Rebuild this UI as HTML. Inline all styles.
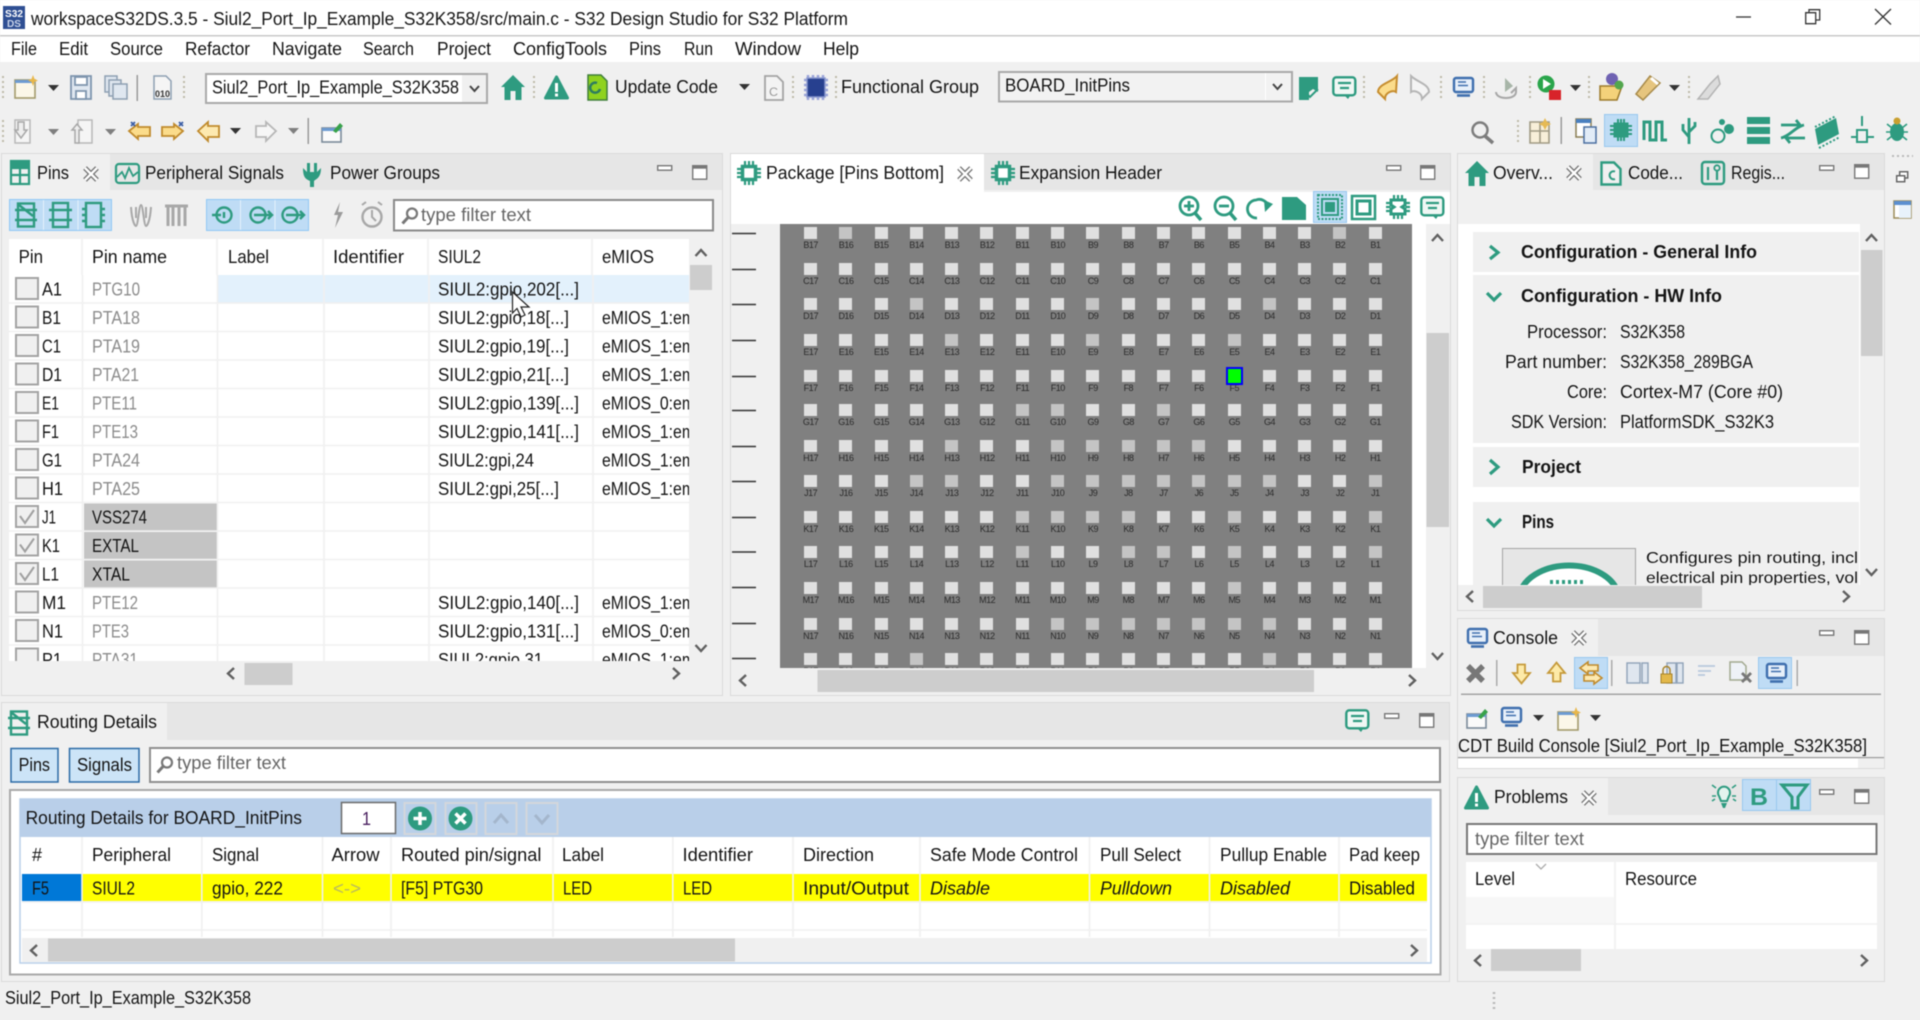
<!DOCTYPE html>
<html lang="en"><head><meta charset="utf-8"><title>S32 Design Studio</title>
<style>
html,body{margin:0;padding:0;width:1920px;height:1020px;overflow:hidden;background:#f0f0f0}
#w{position:relative;width:1920px;height:1020px;overflow:hidden;filter:blur(.45px)}
svg{position:absolute;left:0;top:0}
text{font:18px "Liberation Sans",sans-serif;fill:#141414}
.u text,text.u{transform:translateY(-.8px)}
.n{fill:#8c8c8c}.b{font-weight:bold}.i{font-style:italic}.h{fill:#666}
#pk{position:absolute;left:793px;top:227px;width:610px;height:441px;overflow:hidden;display:grid;grid-template-columns:repeat(17,35.3px);grid-template-rows:36px 35px 36px 36px 34px 36px 35px 36px 35px 36px 36px 35px 36px}
#pk i{display:block;position:relative;font:normal 9px/12px "Liberation Sans",sans-serif;color:#2b2b2b;text-align:center;padding-top:12px;letter-spacing:-.5px}
#pk i::before{content:"";position:absolute;left:11px;top:0;width:13px;height:12px;background:#e0e0e0}
#pk i.g::before{background:#c4c4c4}
#pk i.s::before{left:9.4px;top:-3px;width:13px;height:14px;background:#0f0;border:2px solid #00f}
</style></head><body><div id="w">
<svg width="1920" height="1020" viewBox="0 0 1920 1020" xmlns="http://www.w3.org/2000/svg">
<defs>
<clipPath id="c1"><rect x="9" y="239" width="680" height="422"/></clipPath>
<clipPath id="c2"><rect x="1473" y="224" width="386" height="361"/></clipPath>
<symbol id="tri" width="12" height="7" overflow="visible"><path d="M0 0H11L5.5 6Z" fill="#333"/></symbol>
<symbol id="x" width="16" height="16" overflow="visible"><path d="M2 2L14 14M14 2L2 14" stroke="#707070" stroke-width="5" fill="none"/><path d="M2 2L14 14M14 2L2 14" stroke="#fff" stroke-width="2.400" fill="none"/></symbol>
<symbol id="mn" width="16" height="7" overflow="visible"><rect x=".7" y=".7" width="14" height="4.5" fill="#fff" stroke="#777" stroke-width="1.4"/></symbol>
<symbol id="mx" width="16" height="16" overflow="visible"><rect x=".7" y=".7" width="14" height="13.5" fill="#fff" stroke="#777" stroke-width="1.4"/><rect x=".7" y=".7" width="14" height="3" fill="#777"/></symbol>
<symbol id="cb" width="25" height="24" overflow="visible"><rect x="1" y="1" width="22" height="21" fill="#f0f0f0" stroke="#a3a3a3" stroke-width="2"/></symbol>
<symbol id="cc" width="25" height="24" overflow="visible"><rect x="1" y="1" width="22" height="21" fill="#f0f0f0" stroke="#a3a3a3" stroke-width="2"/><path d="M5 11L10 18L19 5" fill="none" stroke="#a0a0a0" stroke-width="2"/></symbol>
<symbol id="up" width="14" height="10" overflow="visible"><path d="M1 8L6.5 2L12 8" fill="none" stroke="#606060" stroke-width="2.4"/></symbol>
<symbol id="dn" width="14" height="10" overflow="visible"><path d="M1 2L6.5 8L12 2" fill="none" stroke="#606060" stroke-width="2.4"/></symbol>
<symbol id="lf" width="10" height="14" overflow="visible"><path d="M8 1L2 6.5L8 12" fill="none" stroke="#606060" stroke-width="2.4"/></symbol>
<symbol id="rt" width="10" height="14" overflow="visible"><path d="M2 1L8 6.5L2 12" fill="none" stroke="#606060" stroke-width="2.4"/></symbol>
<symbol id="home" width="24" height="25" overflow="visible"><path d="M12 0L24 12H20.5V25H14.5V16H9.5V25H3.5V12H0Z" fill="#2e9b80"/></symbol>
<symbol id="warn" width="25" height="25" overflow="visible"><path d="M12.5 2L23.5 23H1.5Z" fill="#2e9b80" stroke="#2e9b80" stroke-width="3" stroke-linejoin="round"/><rect x="11" y="8" width="3" height="9" fill="#fff"/><rect x="11" y="18.5" width="3" height="3" fill="#fff"/></symbol>
<symbol id="chip" width="24" height="24" overflow="visible"><path d="M8 0V24M12 0V24M16 0V24M0 8H24M0 12H24M0 16H24" stroke="#2e9b80" stroke-width="2.2" stroke-dasharray="4.5 15 4.5" fill="none"/><rect x="5.5" y="5.5" width="13" height="13" fill="#fff" stroke="#2e9b80" stroke-width="3.5"/></symbol>
<symbol id="mon" width="21" height="20" overflow="visible"><rect x="1" y="1" width="19" height="14" rx="2" fill="#e8f0fa" stroke="#3f6fae" stroke-width="2.4"/><path d="M5 5H13M5 8.500H15" stroke="#3f6fae" stroke-width="1.6"/><path d="M4 18.500H17" stroke="#3f6fae" stroke-width="2.6"/></symbol>
<symbol id="new" width="24" height="24" overflow="visible"><rect x="1" y="5" width="20" height="18" fill="#fbf7e8" stroke="#a39a6c" stroke-width="1.6"/><rect x="1" y="5" width="20" height="3" fill="#6d9bd2"/><path d="M19 0L20.500 4L24 5.500L20.500 7L19 11L17.500 7L14 5.500L17.500 4Z" fill="#e8b74a"/></symbol>
<symbol id="pin" width="22" height="21" overflow="visible"><rect x="1" y="6" width="19" height="14" fill="#fafafa" stroke="#7b8a99" stroke-width="1.6"/><rect x="1" y="6" width="19" height="3" fill="#6d9bd2"/><path d="M12 9L19 1L22 4L15 11Z" fill="#38a24a"/></symbol>
<symbol id="srch" width="18" height="18" overflow="visible"><circle cx="11" cy="6.500" r="5" fill="none" stroke="#777" stroke-width="2.2"/><path d="M7 10.500L1.500 16.500" stroke="#777" stroke-width="3"/></symbol>
<symbol id="cdoc" width="22" height="25" overflow="visible"><path d="M1.500 1.500H14L20.500 8V23.500H1.500Z" fill="#f0f0f0" stroke="#2e9b80" stroke-width="2.400"/><path d="M15 10.500A4 4 0 1 0 15 18" fill="none" stroke="#2e9b80" stroke-width="2"/></symbol>
<symbol id="chat" width="25" height="23" overflow="visible"><rect x="1.300" y="1.300" width="22" height="18" rx="3" fill="#f0f7f4" stroke="#2e9b80" stroke-width="2.400"/><path d="M6 7H19M8 12H17" stroke="#2e9b80" stroke-width="2.200"/><path d="M13 20L16 23L18 20Z" fill="#2e9b80"/></symbol>
<symbol id="rout" width="22" height="26" overflow="visible"><rect x="3" y="1.500" width="16" height="23" fill="none" stroke="#2e9b80" stroke-width="2.400"/><path d="M0 8H22M0 18H22M4 3L18 14" stroke="#2e9b80" stroke-width="2.400"/></symbol>
<symbol id="ua" width="19" height="22" overflow="visible"><path d="M5.500 1.500H13V10H18L9.500 20.500L1 10H5.500Z" fill="#fdeaa8" stroke="#c69a3a" stroke-width="1.800"/></symbol>
</defs>

<rect width="1920" height="1020" fill="#f0f0f0"/>
<!-- title bar -->
<rect width="1920" height="35" fill="#fff"/>
<rect y="35" width="1920" height="1.500" fill="#c8c8c8"/>
<rect x="3" y="6" width="22" height="23" fill="#2f4f93"/>
<text x="5" y="17" style="font-size:10px;font-weight:bold;fill:#fff" textLength="18" lengthAdjust="spacingAndGlyphs">S32</text>
<text x="7" y="27" style="font-size:10px;font-weight:bold;fill:#c9d4ea" textLength="14" lengthAdjust="spacingAndGlyphs">DS</text>
<text x="31" y="25" textLength="817" lengthAdjust="spacingAndGlyphs">workspaceS32DS.3.5 - Siul2_Port_Ip_Example_S32K358/src/main.c - S32 Design Studio for S32 Platform</text>
<path d="M1736 17H1751" stroke="#333" stroke-width="1.300"/>
<path d="M1805.700 12.700H1815.700V23.700H1805.700ZM1809 12.700V9.700H1819.700V20H1815.700" fill="none" stroke="#333" stroke-width="1.300"/>
<path d="M1875 9L1891 24.500M1891 9L1875 24.500" stroke="#333" stroke-width="1.300"/>
<!-- menu -->
<rect y="36.500" width="1920" height="25.500" fill="#fff"/>
<g class="u">
<text x="11" y="56" textLength="26" lengthAdjust="spacingAndGlyphs">File</text>
<text x="59" y="56" textLength="29" lengthAdjust="spacingAndGlyphs">Edit</text>
<text x="110" y="56" textLength="53" lengthAdjust="spacingAndGlyphs">Source</text>
<text x="185" y="56" textLength="65" lengthAdjust="spacingAndGlyphs">Refactor</text>
<text x="272" y="56" textLength="70" lengthAdjust="spacingAndGlyphs">Navigate</text>
<text x="363" y="56" textLength="51" lengthAdjust="spacingAndGlyphs">Search</text>
<text x="437" y="56" textLength="54" lengthAdjust="spacingAndGlyphs">Project</text>
<text x="513" y="56" textLength="94" lengthAdjust="spacingAndGlyphs">ConfigTools</text>
<text x="629" y="56" textLength="32" lengthAdjust="spacingAndGlyphs">Pins</text>
<text x="684" y="56" textLength="29" lengthAdjust="spacingAndGlyphs">Run</text>
<text x="735" y="56" textLength="66" lengthAdjust="spacingAndGlyphs">Window</text>
<text x="823" y="56" textLength="36" lengthAdjust="spacingAndGlyphs">Help</text>
</g>

<!-- toolbar row 1 -->
<g fill="none" stroke="#bdb9a8" stroke-width="2" stroke-dasharray="2 3"><path d="M3 76V100M184 76V100M534 76V100M793 76V100M836 76V100M1364 76V100M1441 76V100M1484 76V100M1530 76V100M1589 76V100M1689 76V100M3 120V144M1518 120V144"/></g>
<use href="#new" x="14" y="75"/><use href="#tri" x="48" y="85"/>
<g fill="#dfe7f0" stroke="#7d94ad" stroke-width="1.800"><path d="M71 76H91V99H71Z"/><path d="M75 77H87V85H75Z" fill="#fff"/><path d="M76 91H86V99H76Z" fill="#fff"/></g>
<g fill="#dfe7f0" stroke="#8d9fb2" stroke-width="1.500"><path d="M105 76H117V92H105Z"/><path d="M109 80H121V96H109Z"/><path d="M113 84H127V99H113Z"/></g>
<rect x="136.500" y="75" width="1.500" height="26" fill="#9a9a9a"/>
<path d="M154 76H166L171 81V99H154Z" fill="#f5f5f5" stroke="#8d9fb2" stroke-width="1.500"/><text x="155" y="97" style="font-size:9px;fill:#333;font-weight:bold" textLength="15" lengthAdjust="spacingAndGlyphs">010</text>
<rect x="206" y="74" width="281" height="29" fill="#fff" stroke="#a9a9a9" stroke-width="2"/>
<rect x="462" y="75" width="24" height="27" fill="#f0f0f0"/>
<text class="u" x="212" y="94.300" textLength="247" lengthAdjust="spacingAndGlyphs">Siul2_Port_Ip_Example_S32K358</text>
<path d="M470 86L474.500 91L479 86" fill="none" stroke="#444" stroke-width="2"/>
<use href="#home" x="501" y="75"/><use href="#warn" x="544" y="75"/>
<path d="M588 75H601L607 81V100H588Z" fill="#8fd21f" stroke="#3f7f3a" stroke-width="1.500"/><path d="M597 83a5 5 0 1 0 3 6" fill="none" stroke="#2e7d5f" stroke-width="2.500"/>
<text class="u" x="615" y="94" textLength="103" lengthAdjust="spacingAndGlyphs">Update Code</text>
<use href="#tri" x="739" y="84"/>
<path d="M765 76H777L783 82V100H765Z" fill="#f3f3f3" stroke="#a3a3a3" stroke-width="1.800"/><text x="769" y="96" style="font-size:12px;fill:#999" textLength="9" lengthAdjust="spacingAndGlyphs">C</text>
<g><path d="M808 75V100M813 75V100M818 75V100M823 75V100M804 80H828M804 85H828M804 90H828M804 95H828" stroke="#9aa4d8" stroke-width="2.500"/><rect x="807" y="78" width="18" height="19" fill="#27408f" stroke="#8c99cf" stroke-width="1.500"/></g>
<text class="u" x="841" y="94" textLength="138" lengthAdjust="spacingAndGlyphs">Functional Group</text>
<rect x="999" y="72" width="293" height="29.500" fill="#f2f2f2" stroke="#a9a9a9" stroke-width="2"/>
<rect x="1265" y="73" width="1" height="27" fill="#fff"/>
<text class="u" x="1005" y="92.500" textLength="125" lengthAdjust="spacingAndGlyphs">BOARD_InitPins</text>
<path d="M1273 84L1277.500 89L1282 84" fill="none" stroke="#444" stroke-width="2"/>
<path d="M1299 77H1318V92L1313 89L1309 92V100H1299Z" fill="#2e9b80"/><path d="M1306 93L1310 97L1318 89" fill="none" stroke="#2e9b80" stroke-width="2"/>
<use href="#chat" x="1332" y="76"/>
<path d="M1397 76C1392 82 1378 84 1378 92L1385 99C1385 92 1393 90 1396 92Z" fill="#fbdc8b" stroke="#c68d2f" stroke-width="2"/>
<path d="M1411 76C1417 82 1429 84 1429 92L1422 99C1422 92 1414 90 1411 92Z" fill="#f4f4f4" stroke="#b5b5b5" stroke-width="2"/>
<use href="#mon" x="1453" y="77"/>
<path d="M1496 92C1496 100 1516 100 1516 92V88L1511 93" fill="#eee" stroke="#a7a7a7" stroke-width="2"/><path d="M1505 78L1513 86L1505 92Z" fill="#a7b5a8"/>
<circle cx="1546" cy="84" r="8.500" fill="#2aa54b"/><path d="M1543 79L1551 84L1543 89Z" fill="#fff"/><rect x="1549" y="90" width="12" height="10" fill="#d8232a"/>
<use href="#tri" x="1570" y="85"/>
<path d="M1600 86H1622L1617 100H1600Z" fill="#f4d27a" stroke="#9c7a2a" stroke-width="1.500"/><circle cx="1612" cy="79" r="6" fill="#6f62b2"/><circle cx="1619" cy="85" r="4.500" fill="#52a64d"/>
<path d="M1636 94L1650 76L1660 83L1643 100Z" fill="#e6c57e" stroke="#a78a4a" stroke-width="1.500"/><path d="M1651 78L1658 84" stroke="#fff" stroke-width="3"/>
<use href="#tri" x="1669" y="85"/>
<path d="M1698 99L1710 84L1718 76L1720 84L1708 99Z" fill="#dcdcdc" stroke="#b4b4b4" stroke-width="1.500"/>

<!-- toolbar row 2 -->
<path d="M15 120H30V143H15Z" fill="#f5f5f5" stroke="#b8b8b8" stroke-width="1.500"/><path d="M18 122H24V130H27L21 138L15 130H18Z" fill="#eee" stroke="#a8a8a8" stroke-width="1.500"/>
<use href="#tri" x="48" y="129" opacity=".6"/>
<path d="M78 120H92V143H78Z" fill="#f5f5f5" stroke="#b8b8b8" stroke-width="1.500"/><path d="M77 124L82 130H79V143H75V130H72Z" fill="#eee" stroke="#a8a8a8" stroke-width="1.500"/>
<use href="#tri" x="105" y="129" opacity=".6"/>
<path d="M129 131L138 124V127H150V136H138V139Z" fill="#fbdc8b" stroke="#c08a2c" stroke-width="1.800"/><path d="M131 122L135 126M135 122L131 126" stroke="#3d5fa6" stroke-width="1.800"/>
<path d="M183 131L174 124V127H162V136H174V139Z" fill="#fbdc8b" stroke="#c08a2c" stroke-width="1.800"/><path d="M179 122L183 126M183 122L179 126" stroke="#3d5fa6" stroke-width="1.800"/>
<path d="M198 131L208 122V126H219V137H208V141Z" fill="#fde9b0" stroke="#c08a2c" stroke-width="1.800"/>
<use href="#tri" x="230" y="128"/>
<path d="M276 131L266 122V126H256V137H266V141Z" fill="#f6f6f6" stroke="#b7b7b7" stroke-width="1.800"/>
<use href="#tri" x="288" y="128" opacity=".6"/>
<rect x="307.500" y="118" width="1.500" height="26" fill="#9a9a9a"/>
<use href="#pin" x="321" y="122"/>

<circle cx="1480" cy="130" r="7.500" fill="none" stroke="#7d7d7d" stroke-width="2.500"/><path d="M1485 136L1493 143" stroke="#7d7d7d" stroke-width="3.500"/>
<path d="M1530 122H1549V143H1530ZM1530 131H1549M1540 122V143" fill="#f8efd9" stroke="#a09a84" stroke-width="1.600"/><path d="M1545 118L1547 122L1551 124L1547 126L1545 130L1543 126L1539 124L1543 122Z" fill="#e6ba55"/>
<rect x="1560.500" y="117" width="1.500" height="27" fill="#9a9a9a"/>
<rect x="1576" y="119" width="15" height="18" fill="#fff" stroke="#8a7d53" stroke-width="1.500"/><rect x="1576" y="119" width="15" height="4" fill="#4a80bf"/><rect x="1584" y="127" width="12" height="16" fill="#e2ecf7" stroke="#4a6ea0" stroke-width="1.500"/>
<rect x="1604.500" y="114.500" width="33" height="32" fill="#bfdcf5" stroke="#98c7ef"/>
<g transform="translate(1610,119)"><path d="M8 0V22M11 0V22M14 0V22M0 7H22M0 11H22M0 15H22" stroke="#2e9b80" stroke-width="2"/><rect x="3.500" y="3.500" width="15" height="15" fill="#2e9b80"/></g>
<path d="M1644 140V122H1650V140H1656V122H1662V140H1667" fill="none" stroke="#2e9b80" stroke-width="3"/>
<path d="M1689 118V144M1689 137L1683 130V124M1689 132L1695 126V122" fill="none" stroke="#2e9b80" stroke-width="2.800"/>
<circle cx="1718" cy="136" r="6.500" fill="none" stroke="#2e9b80" stroke-width="2"/><circle cx="1729" cy="129" r="5" fill="#2e9b80"/><circle cx="1722" cy="122" r="3" fill="#2e9b80"/>
<path d="M1747 117H1770V124H1747ZM1747 127H1770V134H1747ZM1747 137H1770V144H1747Z" fill="#2e9b80"/>
<path d="M1781 125H1800L1796 120M1805 138H1786L1790 143M1781 138C1790 136 1795 127 1804 125" fill="none" stroke="#2e9b80" stroke-width="2.800"/>
<path d="M1815 129L1836 118L1839 134L1818 145Z" fill="#2e9b80"/><path d="M1815 127L1836 116M1819 148L1840 137" stroke="#2e9b80" stroke-width="2" stroke-dasharray="2 2"/>
<path d="M1862 116V126M1851 137H1858M1866 137H1874" stroke="#2e9b80" stroke-width="2"/><rect x="1857" y="130" width="10" height="12" fill="none" stroke="#2e9b80" stroke-width="2"/>
<ellipse cx="1897" cy="132" rx="7" ry="9" fill="#2e9b80"/><circle cx="1897" cy="121" r="3.500" fill="#c9a030"/><path d="M1887 124L1907 140M1907 124L1887 140M1886 132H1908" stroke="#2e9b80" stroke-width="1.600"/>

<!-- right trim -->
<path d="M1892 156H1913" stroke="#b8b8b8" stroke-width="2" stroke-dasharray="2 3"/>
<path d="M1896.700 175.700H1904.700V181.700H1896.700ZM1899.700 175.700V171.700H1907.700V178H1904.700" fill="#fff" stroke="#666" stroke-width="1.500"/>
<rect x="1894" y="201" width="17" height="17" fill="#fff" stroke="#9b8b58" stroke-width="1.500"/><rect x="1894" y="201" width="17" height="4" fill="#5b8fd0"/><rect x="1899" y="205" width="12" height="13" fill="#e8f2fb"/>

<!-- PINS PANEL -->
<rect x="1.500" y="153.500" width="721" height="542" fill="#f0f0f0" stroke="#dadada"/>
<rect x="2" y="154" width="720" height="36" fill="#e6e6e6"/>
<rect x="2" y="154" width="108" height="37" fill="#f0f0f0"/>
<g fill="none" stroke="#2e9b80" stroke-width="2.200"><rect x="11" y="161" width="18" height="23"/><path d="M11 168H29M11 175H29M20 168V184"/></g><rect x="11" y="161" width="18" height="6" fill="#2e9b80"/>
<text x="37" y="179" textLength="32" lengthAdjust="spacingAndGlyphs">Pins</text>
<use href="#x" x="83" y="166"/>
<rect x="116" y="164" width="23" height="19" rx="3" fill="none" stroke="#2e9b80" stroke-width="2.200"/><path d="M117 177L122 172L125 178L129 168L133 176L138 172" fill="none" stroke="#2e9b80" stroke-width="1.800"/>
<text x="145" y="179" textLength="139" lengthAdjust="spacingAndGlyphs">Peripheral Signals</text>
<path d="M303 168L307 172V163H310V172H314V163H317V172L321 168C321 178 316 179 314 181V187H310V181C306 179 303 178 303 168Z" fill="#2e9b80"/>
<text x="330" y="179" textLength="110" lengthAdjust="spacingAndGlyphs">Power Groups</text>
<use href="#mn" x="657" y="165"/><use href="#mx" x="692" y="165"/>

<rect x="9.500" y="199.500" width="102" height="31" fill="#bfdcf5" stroke="#90c8f6"/>
<path d="M43.500 200V230M78 200V230" stroke="#e4f1fc"/>
<use href="#rout" x="15" y="202"/>
<g fill="none" stroke="#2e9b80" stroke-width="2.400"><rect x="53" y="203" width="15" height="24"/><path d="M49 210H72M49 220H72"/></g>
<g fill="none" stroke="#2e9b80" stroke-width="2.400"><rect x="86" y="203" width="15" height="24"/><path d="M82 209H86M82 215H86M82 221H86M101 209H105M101 215H105M101 221H105"/></g>
<path d="M131 207C132 222 135 226 136 226C138 226 139 205 141 205C143 205 144 226 146 226C147 226 150 222 151 207M136 207V218M146 207V218" fill="none" stroke="#a8a8a8" stroke-width="2"/>
<path d="M165 206H188M168 206V226M173 206V226M179 206V226M185 206V226" fill="none" stroke="#a8a8a8" stroke-width="3"/>
<rect x="206.500" y="199.500" width="102" height="31" fill="#bfdcf5" stroke="#90c8f6"/>
<path d="M240.500 200V230M275 200V230" stroke="#e4f1fc"/>
<g fill="none" stroke="#2e9b80" stroke-width="2.400"><circle cx="224" cy="215" r="7.500"/><path d="M212 215H221M224 212V218"/><circle cx="258" cy="215" r="7.500"/><path d="M254 215H272M268 211L272 215L268 219"/><circle cx="290" cy="215" r="7.500"/><path d="M286 215H304M300 211L304 215L300 219"/></g>
<path d="M340 202L334 215H338L335 228L343 212H338Z" fill="#9b9b9b"/>
<circle cx="372" cy="217" r="9.500" fill="none" stroke="#a8a8a8" stroke-width="2.400"/><path d="M372 210V217L376 221M362 205L366 202M382 205L378 202" fill="none" stroke="#a8a8a8" stroke-width="2"/>
<rect x="394" y="200" width="319" height="30.500" fill="#fff" stroke="#8a8a8a" stroke-width="2"/>
<use href="#srch" x="401" y="207"/>
<text x="421" y="221" class="h" textLength="110" lengthAdjust="spacingAndGlyphs">type filter text</text>

<!-- pins table -->
<rect x="9" y="239" width="680" height="422" fill="#fff"/>
<g clip-path="url(#c1)">
<rect x="218" y="275" width="471" height="28" fill="#e3f1fc"/>
<rect x="84" y="503.500" width="133" height="27" fill="#c4c4c4"/>
<rect x="84" y="532" width="133" height="27" fill="#c4c4c4"/>
<rect x="84" y="560.500" width="133" height="27" fill="#c4c4c4"/>
<path d="M9 303H689M9 331.500H689M9 360H689M9 388.500H689M9 417H689M9 445.500H689M9 474H689M9 502.500H689M9 531H689M9 559.500H689M9 588H689M9 616.500H689M9 645H689M82.500 275V661M217.500 275V661M324 275V661M429 275V661M593 275V661M82 239V275M217 239V275M323 239V275M428 239V275M592 239V275" fill="none" stroke="#f0f0f0" stroke-width="1.600"/>
<use href="#cb" x="15" y="277"/><use href="#cb" x="15" y="305.500"/><use href="#cb" x="15" y="334"/><use href="#cb" x="15" y="362.500"/><use href="#cb" x="15" y="391"/><use href="#cb" x="15" y="419.500"/><use href="#cb" x="15" y="448"/><use href="#cb" x="15" y="476.500"/><use href="#cc" x="15" y="505"/><use href="#cc" x="15" y="533.500"/><use href="#cc" x="15" y="562"/><use href="#cb" x="15" y="590.500"/><use href="#cb" x="15" y="619"/><use href="#cb" x="15" y="647.500"/>
<text x="18.600" y="263" textLength="24.400" lengthAdjust="spacingAndGlyphs">Pin</text>
<text x="92" y="263" textLength="75" lengthAdjust="spacingAndGlyphs">Pin name</text>
<text x="228" y="263" textLength="41" lengthAdjust="spacingAndGlyphs">Label</text>
<text x="333" y="263" textLength="71" lengthAdjust="spacingAndGlyphs">Identifier</text>
<text x="438" y="263" textLength="43" lengthAdjust="spacingAndGlyphs">SIUL2</text>
<text x="602" y="263" textLength="52" lengthAdjust="spacingAndGlyphs">eMIOS</text>
<g class="u">
<text x="42" y="296.300" textLength="20" lengthAdjust="spacingAndGlyphs">A1</text><text x="92" y="296.300" class="n" textLength="48" lengthAdjust="spacingAndGlyphs">PTG10</text><text x="438" y="296.300" textLength="141" lengthAdjust="spacingAndGlyphs">SIUL2:gpio,202[...]</text>
<text x="42" y="324.800" textLength="19" lengthAdjust="spacingAndGlyphs">B1</text><text x="92" y="324.800" class="n" textLength="48" lengthAdjust="spacingAndGlyphs">PTA18</text><text x="438" y="324.800" textLength="131" lengthAdjust="spacingAndGlyphs">SIUL2:gpio,18[...]</text><text x="602" y="324.800" textLength="96.500" lengthAdjust="spacingAndGlyphs">eMIOS_1:emi</text>
<text x="42" y="353.300" textLength="19" lengthAdjust="spacingAndGlyphs">C1</text><text x="92" y="353.300" class="n" textLength="48" lengthAdjust="spacingAndGlyphs">PTA19</text><text x="438" y="353.300" textLength="131" lengthAdjust="spacingAndGlyphs">SIUL2:gpio,19[...]</text><text x="602" y="353.300" textLength="96.500" lengthAdjust="spacingAndGlyphs">eMIOS_1:emi</text>
<text x="42" y="381.800" textLength="20" lengthAdjust="spacingAndGlyphs">D1</text><text x="92" y="381.800" class="n" textLength="47" lengthAdjust="spacingAndGlyphs">PTA21</text><text x="438" y="381.800" textLength="131" lengthAdjust="spacingAndGlyphs">SIUL2:gpio,21[...]</text><text x="602" y="381.800" textLength="96.500" lengthAdjust="spacingAndGlyphs">eMIOS_1:emi</text>
<text x="42" y="410.300" textLength="17" lengthAdjust="spacingAndGlyphs">E1</text><text x="92" y="410.300" class="n" textLength="45" lengthAdjust="spacingAndGlyphs">PTE11</text><text x="438" y="410.300" textLength="141" lengthAdjust="spacingAndGlyphs">SIUL2:gpio,139[...]</text><text x="602" y="410.300" textLength="96.500" lengthAdjust="spacingAndGlyphs">eMIOS_0:emi</text>
<text x="42" y="438.800" textLength="17" lengthAdjust="spacingAndGlyphs">F1</text><text x="92" y="438.800" class="n" textLength="46" lengthAdjust="spacingAndGlyphs">PTE13</text><text x="438" y="438.800" textLength="141" lengthAdjust="spacingAndGlyphs">SIUL2:gpio,141[...]</text><text x="602" y="438.800" textLength="96.500" lengthAdjust="spacingAndGlyphs">eMIOS_1:emi</text>
<text x="42" y="467.300" textLength="20" lengthAdjust="spacingAndGlyphs">G1</text><text x="92" y="467.300" class="n" textLength="48" lengthAdjust="spacingAndGlyphs">PTA24</text><text x="438" y="467.300" textLength="96" lengthAdjust="spacingAndGlyphs">SIUL2:gpi,24</text><text x="602" y="467.300" textLength="96.500" lengthAdjust="spacingAndGlyphs">eMIOS_1:emi</text>
<text x="42" y="495.800" textLength="21" lengthAdjust="spacingAndGlyphs">H1</text><text x="92" y="495.800" class="n" textLength="48" lengthAdjust="spacingAndGlyphs">PTA25</text><text x="438" y="495.800" textLength="121" lengthAdjust="spacingAndGlyphs">SIUL2:gpi,25[...]</text><text x="602" y="495.800" textLength="96.500" lengthAdjust="spacingAndGlyphs">eMIOS_1:emi</text>
<text x="42" y="524.300" textLength="14" lengthAdjust="spacingAndGlyphs">J1</text><text x="92" y="524.300" textLength="55" lengthAdjust="spacingAndGlyphs">VSS274</text>
<text x="42" y="552.800" textLength="18" lengthAdjust="spacingAndGlyphs">K1</text><text x="92" y="552.800" textLength="47" lengthAdjust="spacingAndGlyphs">EXTAL</text>
<text x="42" y="581.300" textLength="17" lengthAdjust="spacingAndGlyphs">L1</text><text x="92" y="581.300" textLength="38" lengthAdjust="spacingAndGlyphs">XTAL</text>
<text x="42" y="609.800" textLength="24" lengthAdjust="spacingAndGlyphs">M1</text><text x="92" y="609.800" class="n" textLength="46" lengthAdjust="spacingAndGlyphs">PTE12</text><text x="438" y="609.800" textLength="141" lengthAdjust="spacingAndGlyphs">SIUL2:gpio,140[...]</text><text x="602" y="609.800" textLength="96.500" lengthAdjust="spacingAndGlyphs">eMIOS_1:emi</text>
<text x="42" y="638.300" textLength="21" lengthAdjust="spacingAndGlyphs">N1</text><text x="92" y="638.300" class="n" textLength="37" lengthAdjust="spacingAndGlyphs">PTE3</text><text x="438" y="638.300" textLength="141" lengthAdjust="spacingAndGlyphs">SIUL2:gpio,131[...]</text><text x="602" y="638.300" textLength="96.500" lengthAdjust="spacingAndGlyphs">eMIOS_0:emi</text>
<text x="42" y="666.800" textLength="20" lengthAdjust="spacingAndGlyphs">P1</text><text x="92" y="666.800" class="n" textLength="46" lengthAdjust="spacingAndGlyphs">PTA31</text><text x="438" y="666.800" textLength="105" lengthAdjust="spacingAndGlyphs">SIUL2:gpio,31</text><text x="602" y="666.800" textLength="96.500" lengthAdjust="spacingAndGlyphs">eMIOS_1:emi</text>
</g>
</g>
<rect x="690" y="265" width="22" height="25" fill="#cdcdcd"/>
<use href="#up" x="694.500" y="248"/><use href="#dn" x="694.500" y="643"/>
<rect x="244.500" y="663" width="48" height="22" fill="#cdcdcd"/>
<use href="#lf" x="226" y="667"/><use href="#rt" x="671" y="667"/>

<!-- PACKAGE PANEL -->
<rect x="730.500" y="153.500" width="720" height="542" fill="#f0f0f0" stroke="#dadada"/>
<rect x="731" y="154" width="719" height="36" fill="#e6e6e6"/>
<rect x="731" y="154" width="253" height="38" fill="#fff"/>
<rect x="984" y="190" width="466" height="2" fill="#f0f0f0"/>
<use href="#chip" x="737" y="161"/>
<text x="766" y="179" textLength="178" lengthAdjust="spacingAndGlyphs">Package [Pins Bottom]</text>
<use href="#x" x="957" y="166"/>
<use href="#chip" x="991" y="161"/>
<text x="1019" y="179" textLength="143" lengthAdjust="spacingAndGlyphs">Expansion Header</text>
<use href="#mn" x="1386" y="165"/><use href="#mx" x="1420" y="165"/>
<rect x="731" y="192" width="719" height="32" fill="#fff"/>
<rect x="780" y="224" width="632" height="444" fill="#808080"/>
<rect x="1412" y="224" width="14" height="444" fill="#fff"/>
<rect x="731" y="224" width="49" height="444" fill="#f0f0f0"/>
<g stroke="#333" stroke-width="1.500"><path d="M732 233.500H756M732 269.500H756M732 304.500H756M732 340.500H756M732 376.500H756M732 410.500H756M732 446.500H756M732 481.500H756M732 517.500H756M732 552H756M732 587.500H756M732 623.500H756M732 658.500H756"/></g>
<!-- package toolbar -->
<g fill="none" stroke="#2e9b80" stroke-width="2.800"><circle cx="1189" cy="206" r="9"/><path d="M1195 213L1201 220" stroke-width="3.500"/><path d="M1184 206H1194M1189 201V211"/><circle cx="1224" cy="206" r="9"/><path d="M1230 213L1236 220" stroke-width="3.500"/><path d="M1219 206H1229"/><path d="M1257 218A9 9 0 0 1 1256 200A9 9 0 0 1 1268 206"/></g>
<path d="M1264 200L1273 204L1265 212Z" fill="#2e9b80"/>
<path d="M1282 197H1297L1306 205V220H1282Z" fill="#2e9b80"/>
<rect x="1313.500" y="191.500" width="33" height="31" fill="#bfdcf5" stroke="#98c7ef"/>
<rect x="1318" y="195" width="24" height="24" fill="none" stroke="#2e9b80" stroke-width="2" stroke-dasharray="2 1.500"/><rect x="1322" y="199" width="16" height="16" fill="none" stroke="#2e9b80" stroke-width="2"/><rect x="1325" y="202" width="10" height="10" fill="#2e9b80"/>
<rect x="1352" y="196" width="23" height="23" fill="none" stroke="#2e9b80" stroke-width="2.500"/><rect x="1357" y="201" width="13" height="13" fill="none" stroke="#2e9b80" stroke-width="3"/>
<g transform="translate(1386,195)"><path d="M8 0V24M12 0V24M16 0V24M0 8H24M0 12H24M0 16H24" stroke="#2e9b80" stroke-width="2.200" stroke-dasharray="4.500 15 4.500" fill="none"/><path d="M5 5H19V10L16 12L19 14V19H5V14L8 12L5 10Z" fill="none" stroke="#2e9b80" stroke-width="3"/></g>
<use href="#chat" x="1420" y="196"/>
<!-- package scrollbars -->
<rect x="1426" y="224" width="24" height="444" fill="#f0f0f0"/>
<rect x="1426.500" y="333" width="22.500" height="194" fill="#cdcdcd"/>
<use href="#up" x="1431" y="233"/><use href="#dn" x="1431" y="651"/>
<rect x="817.500" y="670" width="496.500" height="22" fill="#cdcdcd"/>
<use href="#lf" x="738" y="674"/><use href="#rt" x="1407" y="674"/>

<!-- OVERVIEW PANEL -->
<rect x="1457.500" y="153.500" width="427" height="457" fill="#f0f0f0" stroke="#dadada"/>
<rect x="1458" y="154" width="426" height="36" fill="#e6e6e6"/>
<rect x="1458" y="154" width="135" height="37" fill="#f0f0f0"/>
<use href="#home" x="1465" y="161"/>
<text x="1493" y="179" textLength="60" lengthAdjust="spacingAndGlyphs">Overv...</text>
<use href="#x" x="1566" y="165"/>
<use href="#cdoc" x="1600" y="161"/>
<text x="1628" y="179" textLength="55" lengthAdjust="spacingAndGlyphs">Code...</text>
<rect x="1702" y="162" width="22" height="22" rx="3" fill="none" stroke="#2e9b80" stroke-width="2.400"/><path d="M1708 167V180M1717 171V180" stroke="#2e9b80" stroke-width="2.200"/><circle cx="1717" cy="168" r="2.700" fill="none" stroke="#2e9b80" stroke-width="1.800"/>
<text x="1731" y="179" textLength="54" lengthAdjust="spacingAndGlyphs">Regis...</text>
<use href="#mn" x="1819" y="165"/><use href="#mx" x="1854" y="164"/>
<rect x="1458" y="224" width="402" height="361" fill="#fff"/>
<g fill="#f0f0f0"><rect x="1473" y="232" width="386" height="40"/><rect x="1473" y="275" width="386" height="168"/><rect x="1473" y="447" width="386" height="40"/><rect x="1473" y="502" width="386" height="83"/></g>
<g fill="none" stroke="#2e9b80" stroke-width="3.200"><path d="M1490 246L1498 252.500L1490 259M1490 460L1498 467L1490 474M1487 293L1494 300L1501 293M1487 519L1494 526L1501 519"/></g>
<text x="1521" y="258" class="b" textLength="236" lengthAdjust="spacingAndGlyphs">Configuration - General Info</text>
<text x="1521" y="302" class="b" textLength="201" lengthAdjust="spacingAndGlyphs">Configuration - HW Info</text>
<text x="1527" y="338" textLength="80" lengthAdjust="spacingAndGlyphs">Processor:</text><text x="1620" y="338" textLength="65" lengthAdjust="spacingAndGlyphs">S32K358</text>
<text x="1505" y="368" textLength="102" lengthAdjust="spacingAndGlyphs">Part number:</text><text x="1620" y="368" textLength="133" lengthAdjust="spacingAndGlyphs">S32K358_289BGA</text>
<text x="1567" y="398" textLength="40" lengthAdjust="spacingAndGlyphs">Core:</text><text x="1620" y="398" textLength="163" lengthAdjust="spacingAndGlyphs">Cortex-M7 (Core #0)</text>
<text x="1511" y="428" textLength="96" lengthAdjust="spacingAndGlyphs">SDK Version:</text><text x="1620" y="428" textLength="154" lengthAdjust="spacingAndGlyphs">PlatformSDK_S32K3</text>
<text x="1522" y="473" class="b" textLength="59" lengthAdjust="spacingAndGlyphs">Project</text>
<text x="1522" y="528" class="b" textLength="32" lengthAdjust="spacingAndGlyphs">Pins</text>
<g clip-path="url(#c2)">
<rect x="1502.500" y="548.500" width="133" height="50" fill="#e6e6e6" stroke="#a3a3a3"/>
<path d="M1521 590A50 34 0 0 1 1617 590V600H1521Z" fill="#fff" stroke="#2e9b80" stroke-width="6"/>
<path d="M1550 582H1584" stroke="#2e9b80" stroke-width="4" stroke-dasharray="3 3"/>
<text x="1646" y="563" style="font-size:16px" textLength="212" lengthAdjust="spacingAndGlyphs">Configures pin routing, incl</text>
<text x="1646" y="583" style="font-size:16px" textLength="212" lengthAdjust="spacingAndGlyphs">electrical pin properties, vol</text>
</g>
<rect x="1861" y="250" width="21.500" height="106" fill="#cdcdcd"/>
<use href="#up" x="1865" y="233"/><use href="#dn" x="1865" y="567"/>
<rect x="1483" y="586" width="219" height="22" fill="#cdcdcd"/>
<use href="#lf" x="1465" y="590"/><use href="#rt" x="1841" y="590"/>

<!-- CONSOLE PANEL -->
<rect x="1457.500" y="618.500" width="427" height="150" fill="#f0f0f0" stroke="#dadada"/>
<rect x="1458" y="619" width="426" height="37" fill="#e6e6e6"/>
<rect x="1458" y="619" width="140" height="38" fill="#f0f0f0"/>
<use href="#mon" x="1467" y="628"/>
<text x="1493" y="644" textLength="65" lengthAdjust="spacingAndGlyphs">Console</text>
<use href="#x" x="1571" y="630"/>
<use href="#mn" x="1819" y="630"/><use href="#mx" x="1854" y="630"/>
<path d="M1468 666L1483 681M1483 666L1468 681" stroke="#777" stroke-width="5.500"/>
<rect x="1496" y="660" width="1.500" height="26" fill="#aaa"/>
<use href="#ua" x="1512" y="663"/><use href="#ua" x="1547" y="663" transform="rotate(180 1556.500 673)"/>
<rect x="1574.500" y="657.500" width="33" height="31" fill="#bfdcf5" stroke="#98c7ef"/>
<path d="M1580 668L1588 662V665H1598V671H1588V674ZM1602 678L1594 672V675H1584V681H1594V684Z" fill="#fde9b0" stroke="#c08a2c" stroke-width="1.600"/>
<rect x="1611" y="660" width="1.500" height="26" fill="#aaa"/>
<g fill="#dfe6ef" stroke="#8fa2b8" stroke-width="1.400"><rect x="1627" y="663" width="13" height="20"/><rect x="1642" y="663" width="6" height="20"/><rect x="1667" y="663" width="9" height="20"/><rect x="1677" y="663" width="6" height="20"/></g>
<rect x="1661" y="674" width="11" height="9" fill="#e3b84a" stroke="#a8842b"/><path d="M1663 674V670A3 3 0 0 1 1670 670V674" fill="none" stroke="#a8842b" stroke-width="1.500"/>
<path d="M1698 666H1715M1698 671H1711M1698 675H1705" stroke="#b7c8dd" stroke-width="1.800"/>
<path d="M1730 662H1742L1746 666V680H1730Z" fill="#eef2f7" stroke="#a2a990" stroke-width="1.500"/><path d="M1742 673L1751 682M1751 673L1742 682" stroke="#777" stroke-width="2.800"/>
<rect x="1758.500" y="657.500" width="33" height="31" fill="#bfdcf5" stroke="#98c7ef"/>
<use href="#mon" x="1766" y="663"/>
<rect x="1796.500" y="660" width="1.500" height="26" fill="#aaa"/>
<rect x="1461" y="693.500" width="420" height="1.500" fill="#a3a3a3"/>
<use href="#pin" x="1466" y="708"/><use href="#mon" x="1501" y="707"/><use href="#tri" x="1533" y="715"/><use href="#new" x="1557" y="707"/><use href="#tri" x="1590" y="715"/>
<text x="1458" y="752" textLength="409" lengthAdjust="spacingAndGlyphs">CDT Build Console [Siul2_Port_Ip_Example_S32K358]</text>
<rect x="1458" y="757" width="426" height="1.200" fill="#9a9a9a"/>
<rect x="1458" y="758.500" width="400" height="9.500" fill="#fff"/>

<!-- PROBLEMS PANEL -->
<rect x="1457.500" y="777.500" width="427" height="204" fill="#f0f0f0" stroke="#dadada"/>
<rect x="1458" y="778" width="426" height="37" fill="#e6e6e6"/>
<rect x="1458" y="778" width="150" height="38" fill="#f0f0f0"/>
<use href="#warn" x="1464" y="785"/>
<text x="1494" y="803" textLength="74" lengthAdjust="spacingAndGlyphs">Problems</text>
<use href="#x" x="1581" y="790"/>
<path d="M1719 796A6 6 0 1 1 1729 796L1727 801H1721Z" fill="#e4f3ee" stroke="#2e9b80" stroke-width="2"/><path d="M1721 803H1727L1725 808H1723Z" fill="#2e9b80"/>
<path d="M1712 785L1716 788M1736 785L1732 788M1712 796H1716M1732 796H1736M1712 801L1715 799M1736 801L1733 799" stroke="#2e9b80" stroke-width="1.600"/>
<rect x="1742.500" y="779.500" width="68" height="31" fill="#bfdcf5" stroke="#98c7ef"/><path d="M1776.500 780V810" stroke="#98c7ef"/>
<text x="1750" y="805" class="b" style="font-size:24px;fill:#2e9b80" textLength="18" lengthAdjust="spacingAndGlyphs">B</text>
<path d="M1782 785H1807L1798 797V808H1792V797Z" fill="none" stroke="#2e9b80" stroke-width="3"/>
<use href="#mn" x="1819" y="789"/><use href="#mx" x="1854" y="789"/>
<rect x="1467" y="824" width="409.500" height="30" fill="#fff" stroke="#777" stroke-width="2"/>
<text x="1475" y="845" class="h" textLength="109" lengthAdjust="spacingAndGlyphs">type filter text</text>
<rect x="1466" y="862" width="411" height="87" fill="#fff"/>
<rect x="1466" y="897" width="148" height="26" fill="#f7f7f7"/>
<path d="M1615 862V949M1466 924H1877" stroke="#f0f0f0" stroke-width="1.600"/>
<path d="M1536 864L1541 869L1546 864" fill="none" stroke="#aaa" stroke-width="1.300"/>
<text x="1475" y="885" textLength="40" lengthAdjust="spacingAndGlyphs">Level</text>
<text x="1625" y="885" textLength="72" lengthAdjust="spacingAndGlyphs">Resource</text>
<rect x="1491" y="949" width="90" height="22" fill="#cdcdcd"/>
<use href="#lf" x="1473" y="954"/><use href="#rt" x="1859" y="954"/>
<path d="M1494 992V1012" stroke="#b8b8b8" stroke-width="2.500" stroke-dasharray="2 3"/>

<!-- ROUTING PANEL -->
<rect x="1.500" y="702.500" width="1448" height="279" fill="#f0f0f0" stroke="#dadada"/>
<rect x="2" y="703" width="1447" height="37" fill="#e6e6e6"/>
<rect x="2" y="703" width="165" height="38" fill="#f0f0f0"/>
<use href="#rout" x="8" y="710"/>
<text x="37" y="728" textLength="120" lengthAdjust="spacingAndGlyphs">Routing Details</text>
<use href="#chat" x="1345" y="709"/><use href="#mn" x="1384" y="713"/><use href="#mx" x="1419" y="713"/>
<rect x="11" y="748.500" width="47" height="33.500" fill="#cce4f7" stroke="#2a6aa5" stroke-width="1.500"/>
<text x="18.600" y="771" textLength="31.400" lengthAdjust="spacingAndGlyphs">Pins</text>
<rect x="69.500" y="748.500" width="69.500" height="33.500" fill="#cce4f7" stroke="#2a6aa5" stroke-width="1.500"/>
<text x="77" y="771" textLength="55" lengthAdjust="spacingAndGlyphs">Signals</text>
<rect x="150" y="748" width="1290" height="34" fill="#fff" stroke="#8f8f8f" stroke-width="2"/>
<use href="#srch" x="156" y="756"/>
<text x="177" y="769" class="h" textLength="109" lengthAdjust="spacingAndGlyphs">type filter text</text>
<rect x="10" y="790" width="1430.500" height="184.500" fill="#fff" stroke="#a9a9a9" stroke-width="2"/>
<rect x="20" y="799" width="1411" height="164" fill="#fff" stroke="#b9cfe9" stroke-width="1.500"/>
<rect x="20" y="799" width="1411" height="38" fill="#b9cfe9"/>
<text x="25.600" y="824" textLength="276.400" lengthAdjust="spacingAndGlyphs">Routing Details for BOARD_InitPins</text>
<rect x="341.500" y="802.500" width="54" height="31" fill="#fff" stroke="#6b6b6b" stroke-width="1.500"/>
<text x="362" y="825" style="fill:#4a2160" textLength="9" lengthAdjust="spacingAndGlyphs">1</text>
<g fill="#b9cfe9" stroke="#d3d7dc" stroke-width="2"><rect x="404.500" y="803" width="31" height="31"/><rect x="445.500" y="803" width="31" height="31"/><rect x="485.500" y="803" width="31" height="31"/><rect x="526.500" y="803" width="31" height="31"/></g>
<circle cx="420" cy="818.500" r="12" fill="#2e9b80"/><path d="M420 812V825M413.500 818.500H426.500" stroke="#fff" stroke-width="3.500"/>
<circle cx="460.500" cy="818.500" r="12" fill="#2e9b80"/><path d="M455.500 813.500L465.500 823.500M465.500 813.500L455.500 823.500" stroke="#fff" stroke-width="3.500"/>
<path d="M494 823L501 815L508 823M535 815L542 823L549 815" fill="none" stroke="#a4b6cc" stroke-width="3"/>
<rect x="22" y="874" width="1405" height="27" fill="#ff0"/>
<rect x="22" y="874" width="60" height="27" fill="#0078d7"/>
<path d="M82 837V937M201.800 837V937M322.500 837V937M391 837V937M553 837V937M672.800 837V937M793 837V937M920 837V937M1089.500 837V937M1209.500 837V937M1339 837V937M22 902H1427M22 930H1427" fill="none" stroke="#f0f0f0" stroke-width="1.600"/>
<g class="u">
<text x="32" y="862" textLength="10" lengthAdjust="spacingAndGlyphs">#</text>
<text x="92" y="862" textLength="79" lengthAdjust="spacingAndGlyphs">Peripheral</text>
<text x="212" y="862" textLength="47" lengthAdjust="spacingAndGlyphs">Signal</text>
<text x="331.500" y="862" textLength="48" lengthAdjust="spacingAndGlyphs">Arrow</text>
<text x="401" y="862" textLength="140.400" lengthAdjust="spacingAndGlyphs">Routed pin/signal</text>
<text x="562" y="862" textLength="42" lengthAdjust="spacingAndGlyphs">Label</text>
<text x="682.500" y="862" textLength="70.500" lengthAdjust="spacingAndGlyphs">Identifier</text>
<text x="803" y="862" textLength="71" lengthAdjust="spacingAndGlyphs">Direction</text>
<text x="930" y="862" textLength="148" lengthAdjust="spacingAndGlyphs">Safe Mode Control</text>
<text x="1100" y="862" textLength="81" lengthAdjust="spacingAndGlyphs">Pull Select</text>
<text x="1220" y="862" textLength="107" lengthAdjust="spacingAndGlyphs">Pullup Enable</text>
<text x="1349" y="862" textLength="71" lengthAdjust="spacingAndGlyphs">Pad keep</text>
<text x="32" y="895.500" textLength="17" lengthAdjust="spacingAndGlyphs">F5</text>
<text x="92" y="895.500" textLength="43" lengthAdjust="spacingAndGlyphs">SIUL2</text>
<text x="212" y="895.500" textLength="71" lengthAdjust="spacingAndGlyphs">gpio, 222</text>
<text x="333" y="895.500" style="fill:#b8b860" textLength="28" lengthAdjust="spacingAndGlyphs">&lt;-&gt;</text>
<text x="401" y="895.500" textLength="82" lengthAdjust="spacingAndGlyphs">[F5] PTG30</text>
<text x="563" y="895.500" textLength="29" lengthAdjust="spacingAndGlyphs">LED</text>
<text x="683" y="895.500" textLength="29" lengthAdjust="spacingAndGlyphs">LED</text>
<text x="803" y="895.500" textLength="106" lengthAdjust="spacingAndGlyphs">Input/Output</text>
<text x="930" y="895.500" class="i" textLength="60" lengthAdjust="spacingAndGlyphs">Disable</text>
<text x="1100" y="895.500" class="i" textLength="72" lengthAdjust="spacingAndGlyphs">Pulldown</text>
<text x="1220" y="895.500" class="i" textLength="70" lengthAdjust="spacingAndGlyphs">Disabled</text>
<text x="1349" y="895.500" textLength="66" lengthAdjust="spacingAndGlyphs">Disabled</text>
</g>
<rect x="22" y="938" width="1405" height="24" fill="#f0f0f0"/>
<rect x="48" y="938.500" width="687" height="23" fill="#cdcdcd"/>
<use href="#lf" x="29" y="944"/><use href="#rt" x="1409" y="944"/>

<!-- status -->
<text x="5" y="1004" textLength="246" lengthAdjust="spacingAndGlyphs">Siul2_Port_Ip_Example_S32K358</text>

<!-- mouse cursor -->
<path d="M512.500 292V313L517 308.500L521 317L525 315L521 307H529Z" fill="#fff" stroke="#222" stroke-width="1.200"/>
</svg>
<div id="pk">
<i>B17</i><i class="g">B16</i><i>B15</i><i>B14</i><i>B13</i><i>B12</i><i>B11</i><i>B10</i><i>B9</i><i>B8</i><i>B7</i><i>B6</i><i>B5</i><i>B4</i><i>B3</i><i class="g">B2</i><i>B1</i>
<i>C17</i><i>C16</i><i>C15</i><i>C14</i><i>C13</i><i>C12</i><i>C11</i><i>C10</i><i>C9</i><i>C8</i><i>C7</i><i>C6</i><i>C5</i><i>C4</i><i>C3</i><i>C2</i><i>C1</i>
<i>D17</i><i>D16</i><i>D15</i><i class="g">D14</i><i>D13</i><i>D12</i><i>D11</i><i>D10</i><i class="g">D9</i><i>D8</i><i>D7</i><i>D6</i><i>D5</i><i class="g">D4</i><i>D3</i><i>D2</i><i>D1</i>
<i>E17</i><i>E16</i><i>E15</i><i>E14</i><i class="g">E13</i><i>E12</i><i>E11</i><i>E10</i><i class="g">E9</i><i>E8</i><i>E7</i><i>E6</i><i class="g">E5</i><i>E4</i><i>E3</i><i>E2</i><i>E1</i>
<i>F17</i><i>F16</i><i>F15</i><i>F14</i><i>F13</i><i>F12</i><i>F11</i><i>F10</i><i>F9</i><i>F8</i><i>F7</i><i>F6</i><i class="s">F5</i><i>F4</i><i>F3</i><i>F2</i><i>F1</i>
<i>G17</i><i>G16</i><i>G15</i><i>G14</i><i>G13</i><i>G12</i><i class="g">G11</i><i class="g">G10</i><i>G9</i><i>G8</i><i class="g">G7</i><i>G6</i><i>G5</i><i>G4</i><i>G3</i><i>G2</i><i>G1</i>
<i>H17</i><i>H16</i><i>H15</i><i>H14</i><i class="g">H13</i><i>H12</i><i>H11</i><i class="g">H10</i><i class="g">H9</i><i class="g">H8</i><i class="g">H7</i><i class="g">H6</i><i>H5</i><i>H4</i><i>H3</i><i>H2</i><i>H1</i>
<i>J17</i><i>J16</i><i>J15</i><i class="g">J14</i><i class="g">J13</i><i>J12</i><i>J11</i><i class="g">J10</i><i class="g">J9</i><i class="g">J8</i><i class="g">J7</i><i class="g">J6</i><i class="g">J5</i><i class="g">J4</i><i>J3</i><i>J2</i><i class="g">J1</i>
<i>K17</i><i>K16</i><i>K15</i><i>K14</i><i>K13</i><i>K12</i><i class="g">K11</i><i class="g">K10</i><i class="g">K9</i><i class="g">K8</i><i>K7</i><i>K6</i><i class="g">K5</i><i>K4</i><i>K3</i><i>K2</i><i class="g">K1</i>
<i>L17</i><i>L16</i><i>L15</i><i>L14</i><i>L13</i><i>L12</i><i class="g">L11</i><i>L10</i><i>L9</i><i class="g">L8</i><i class="g">L7</i><i>L6</i><i class="g">L5</i><i>L4</i><i>L3</i><i>L2</i><i class="g">L1</i>
<i>M17</i><i>M16</i><i>M15</i><i>M14</i><i>M13</i><i>M12</i><i>M11</i><i>M10</i><i>M9</i><i>M8</i><i>M7</i><i>M6</i><i class="g">M5</i><i>M4</i><i>M3</i><i>M2</i><i>M1</i>
<i>N17</i><i>N16</i><i>N15</i><i>N14</i><i>N13</i><i>N12</i><i>N11</i><i class="g">N10</i><i class="g">N9</i><i class="g">N8</i><i class="g">N7</i><i class="g">N6</i><i class="g">N5</i><i class="g">N4</i><i>N3</i><i>N2</i><i>N1</i>
<i>P17</i><i>P16</i><i>P15</i><i class="g">P14</i><i>P13</i><i>P12</i><i>P11</i><i>P10</i><i>P9</i><i>P8</i><i>P7</i><i>P6</i><i>P5</i><i class="g">P4</i><i>P3</i><i>P2</i><i>P1</i>
</div>
</div></body></html>
